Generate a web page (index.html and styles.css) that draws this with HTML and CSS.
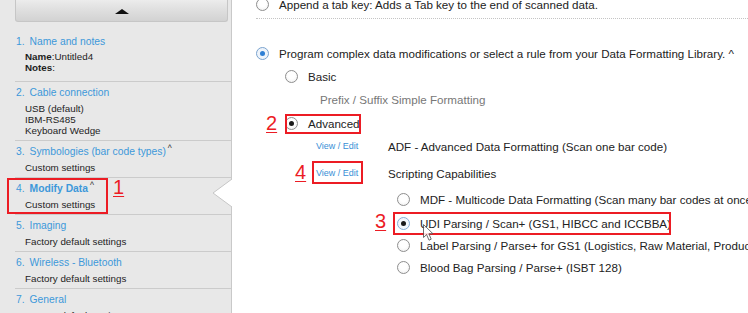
FILE: index.html
```html
<!DOCTYPE html>
<html>
<head>
<meta charset="utf-8">
<title>Modify Data</title>
<link rel="stylesheet" href="styles.css">
</head>
<body>
<div class="page">
  <aside class="sidebar">
    <div class="collapse-btn"><span class="tri"></span></div>

    <div class="step first">
      <div class="step-head"><span class="num">1.</span>Name and notes</div>
      <div class="step-line"><b>Name</b>:Untitled4</div>
      <div class="step-line"><b>Notes</b>:</div>
    </div>

    <div class="step">
      <div class="step-head"><span class="num">2.</span>Cable connection</div>
      <div class="step-line">USB (default)</div>
      <div class="step-line">IBM-RS485</div>
      <div class="step-line">Keyboard Wedge</div>
    </div>

    <div class="step">
      <div class="step-head"><span class="num">3.</span>Symbologies (bar code types)<sup class="caret">^</sup></div>
      <div class="step-line">Custom settings</div>
    </div>

    <div class="step">
      <div class="step-head active"><span class="num">4.</span>Modify Data<sup class="caret">^</sup></div>
      <div class="step-line">Custom settings</div>
    </div>

    <div class="step">
      <div class="step-head"><span class="num">5.</span>Imaging</div>
      <div class="step-line">Factory default settings</div>
    </div>

    <div class="step">
      <div class="step-head"><span class="num">6.</span>Wireless - Bluetooth</div>
      <div class="step-line">Factory default settings</div>
    </div>

    <div class="step">
      <div class="step-head"><span class="num">7.</span>General</div>
      <div class="step-line">Factory default settings</div>
    </div>
  </aside>

  <main class="content">
    <div class="opt row-append"><span class="radio"></span><span>Append a tab key: Adds a Tab key to the end of scanned data.</span></div>
    <div class="dotted"></div>

    <div class="opt row-program"><span class="radio on-blue"></span><span>Program complex data modifications or select a rule from your Data Formatting Library. ^</span></div>

    <div class="sub">
      <div class="opt row-basic"><span class="radio"></span><span>Basic</span></div>
      <div class="note row-prefix">Prefix / Suffix Simple Formatting</div>
      <div class="opt row-adv"><span class="radio on-black"></span><span>Advanced</span></div>

      <div class="tool row-ve1"><a class="link">View / Edit</a><span>ADF - Advanced Data Formatting (Scan one bar code)</span></div>
      <div class="tool row-ve2"><a class="link">View / Edit</a><span>Scripting Capabilities</span></div>

      <div class="scripts">
        <div class="opt row-mdf"><span class="radio"></span><span>MDF - Multicode Data Formatting (Scan many bar codes at once)</span></div>
        <div class="opt row-udi"><span class="radio on-black-blue"></span><span>UDI Parsing / Scan+ (GS1, HIBCC and ICCBBA)</span></div>
        <div class="opt row-lbl"><span class="radio"></span><span>Label Parsing / Parse+ for GS1 (Logistics, Raw Material, Production)</span></div>
        <div class="opt row-lbl"><span class="radio"></span><span>Blood Bag Parsing / Parse+ (ISBT 128)</span></div>
      </div>
    </div>
  </main>

  <svg class="notch" width="20" height="28" viewBox="0 0 20 28">
    <polygon points="20,0 1,14 20,28" fill="#ffffff"/>
    <polyline points="20,0 1,14 20,28" fill="none" stroke="#c6c6c6" stroke-width="1"/>
  </svg>

  <div class="mark box1"></div>
  <div class="mark box2"></div>
  <div class="mark box3"></div>
  <div class="mark box4"></div>
  <span class="tag tag1">1</span>
  <span class="tag tag2">2</span>
  <span class="tag tag3">3</span>
  <span class="tag tag4">4</span>

  <svg class="cursor" width="12" height="18" viewBox="0 0 12 18">
    <path d="M0.5 0.5 L0.5 13.5 L3.6 10.6 L6 16.2 L8.2 15.2 L5.9 9.8 L10 9.8 Z" fill="#ffffff" stroke="#555" stroke-width="1" stroke-linejoin="round" opacity="0.85"/>
  </svg>
</div>
</body>
</html>
```

FILE: styles.css
```css
html, body {
  margin: 0;
  padding: 0;
  background: #ffffff;
}

body {
  font-family: "Liberation Sans", Arial, sans-serif;
  color: #222;
  width: 748px;
  height: 313px;
  overflow: hidden;
}

.page {
  position: relative;
  display: flex;
  width: 748px;
  height: 313px;
  overflow: hidden;
}

/* ---------- sidebar ---------- */
.sidebar {
  flex: none;
  width: 231px;
  height: 313px;
  background: #e8e8e8;
  border-right: 1px solid #c9c9c9;
  font-size: 9.8px;
  color: #1e1e1e;
}

.collapse-btn {
  margin: 0 3px 0 15px;
  height: 21px;
  border: 1px solid #c6c6c6;
  border-top: none;
  border-radius: 0 0 3px 3px;
  background: linear-gradient(#ececec, #e2e2e2 35%, #d2d2d2);
  display: flex;
  align-items: center;
  justify-content: center;
}

.tri {
  width: 0;
  height: 0;
  border-left: 7px solid transparent;
  border-right: 7px solid transparent;
  border-bottom: 5px solid #111;
  margin-top: 1px;
}

.step {
  margin-left: 15px;
  padding: 4px 0 4px 0;
  border-bottom: 1px solid #cbcbcb;
}

.step.first {
  padding-top: 13px;
  padding-bottom: 8px;
}

.step-head {
  height: 14px;
  line-height: 14px;
  font-size: 10.3px;
  color: #3d98da;
  padding-left: 1px;
  margin-bottom: 3px;
  white-space: nowrap;
}

.step-head.active {
  font-weight: bold;
}

.num {
  display: inline-block;
  margin-right: 5px;
  font-weight: normal;
}

.caret {
  color: #333;
  font-size: 8.5px;
  font-weight: normal;
  vertical-align: 4px;
  line-height: 0;
  margin-left: 2px;
}

.step-line {
  padding-left: 10px;
  height: 11px;
  line-height: 11px;
  white-space: nowrap;
}

.step.first .step-line {
  height: 10.5px;
  line-height: 10.5px;
}

/* ---------- content ---------- */
.content {
  flex: 1;
  min-width: 0;
  padding-left: 24px;
  font-size: 11.6px;
  color: #222;
  white-space: nowrap;
}

.opt {
  display: flex;
  align-items: center;
  height: 20px;
}

.radio {
  flex: none;
  box-sizing: border-box;
  width: 13px;
  height: 13px;
  border-radius: 50%;
  border: 1px solid #8e8e8e;
  background: radial-gradient(circle at 50% 40%, #ffffff 40%, #ececec 100%);
  margin-right: 10px;
  position: relative;
}

.radio.on-blue {
  border-color: #7aa3cf;
  background: #eef4fb;
}

.radio.on-blue::after,
.radio.on-black::after,
.radio.on-black-blue::after {
  content: "";
  position: absolute;
  left: 3px;
  top: 3px;
  width: 5px;
  height: 5px;
  border-radius: 50%;
}

.radio.on-blue::after {
  background: #2e7fd4;
}

.radio.on-black::after {
  background: #1a1a1a;
}

.radio.on-black-blue {
  border-color: #86aed8;
  background: #f2f7fc;
}

.radio.on-black-blue::after {
  background: #1a1a1a;
}

.row-append {
  margin-top: -6px;
}

.dotted {
  margin-top: 4px;
  border-top: 1px dotted #c4c4c4;
}

.row-program {
  margin-top: 24px;
}

.sub {
  padding-left: 29px;
}

.row-basic {
  margin-top: 3px;
}

.note {
  height: 20px;
  line-height: 20px;
  padding-left: 35px;
  color: #777;
}

.row-prefix {
  margin-top: 4px;
}

.row-adv {
  margin-top: 3px;
}

.tool {
  display: flex;
  align-items: center;
  height: 20px;
  padding-left: 31px;
}

.row-ve1 {
  margin-top: 3px;
}

.row-ve2 {
  margin-top: 7px;
}

.link {
  display: inline-block;
  width: 72px;
  font-size: 9px;
  color: #3a8fd6;
  cursor: pointer;
}

.scripts {
  padding-left: 112px;
}

.row-mdf {
  margin-top: 6px;
}

.row-udi {
  margin-top: 4px;
}

.row-lbl {
  margin-top: 2px;
}

/* ---------- overlays ---------- */
.notch {
  position: absolute;
  left: 212px;
  top: 179px;
}

.mark {
  position: absolute;
  border: 2px solid #ec1c24;
  box-sizing: border-box;
}

.box1 { left: 7px;   top: 178px; width: 101px; height: 36px; }
.box2 { left: 285px; top: 114px; width: 76px;  height: 20px; }
.box3 { left: 393px; top: 212px; width: 278px; height: 23px; }
.box4 { left: 312px; top: 161px; width: 51px;  height: 23px; }

.tag {
  position: absolute;
  font-family: "Liberation Sans", Arial, sans-serif;
  font-size: 20px;
  line-height: 20px;
  color: #ec1c24;
  text-decoration: underline;
  text-decoration-thickness: 1px;
  text-underline-offset: 2px;
}

.tag1 { left: 113px; top: 177px; }
.tag2 { left: 266px; top: 113px; }
.tag3 { left: 375px; top: 211px; }
.tag4 { left: 295px; top: 162px; }

.cursor {
  position: absolute;
  left: 423px;
  top: 224px;
}
```
